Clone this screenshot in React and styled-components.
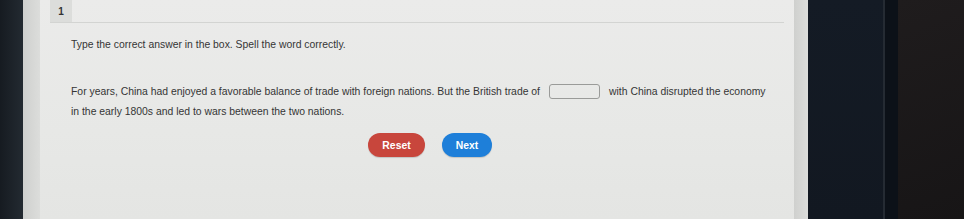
import React from 'react';
import styled, { createGlobalStyle } from 'styled-components';

const GlobalStyle = createGlobalStyle`
  html, body {
    margin: 0;
    padding: 0;
    height: 219px;
    overflow: hidden;
    background: #1b2027;
  }
  #root {
    height: 219px;
  }
`;

const Screen = styled.div`
  display: flex;
  height: 219px;
  font-family: 'Liberation Sans', Arial, sans-serif;
`;

const Bezel = styled.div`
  width: 23px;
  background: linear-gradient(90deg, #161b21, #232a31);
`;

const SideGutter = styled.div`
  width: ${p => p.w}px;
  background: linear-gradient(90deg, #cfd0ce, #dcdddb);
`;

const Main = styled.div`
  width: 754px;
  padding: 0 10px;
  box-sizing: border-box;
  background: linear-gradient(180deg, #ebebea 0%, #e7e8e6 60%, #e4e5e3 100%);
`;

const Header = styled.div`
  display: flex;
  border-bottom: 1px solid #d3d4d2;
  height: 22px;
`;

const Number = styled.div`
  width: 22px;
  height: 22px;
  background: #dcdddb;
  color: #333;
  font-size: 10px;
  font-weight: bold;
  display: flex;
  align-items: center;
  justify-content: center;
`;

const Body = styled.div`
  padding: 14px 0 0 21px;
  color: #353535;
  font-size: 10.4px;
`;

const Instructions = styled.p`
  margin: 0;
  line-height: 16px;
`;

const Passage = styled.p`
  margin: 29px 0 0;
  line-height: 20px;
  width: 695px;
`;

const Blank = styled.input`
  width: 51px;
  height: 15px;
  box-sizing: border-box;
  border: 1px solid #9a9b99;
  border-radius: 3px;
  background: transparent;
  margin: 0 9px;
  padding: 0;
  vertical-align: middle;
  position: relative;
  top: -1px;
`;

const Actions = styled.div`
  display: flex;
  gap: 17px;
  padding-left: 297px;
  margin-top: 11px;
`;

const Button = styled.button`
  width: ${p => p.w}px;
  height: 24px;
  border: none;
  border-radius: 12px;
  color: #fff;
  font-family: 'Liberation Sans', Arial, sans-serif;
  font-weight: bold;
  font-size: 10.4px;
  background: ${p => p.bg};
  box-shadow: 0 1px 1px rgba(0, 0, 0, 0.15);
`;

const Dark = styled.div`
  flex: 1;
  display: flex;
  background: #141a22;
`;

const Panel = styled.div`
  width: 75px;
  background: linear-gradient(180deg, #141b25, #121821);
`;

const Seam = styled.div`
  width: 2px;
  background: #252b33;
`;

const Edge = styled.div`
  width: 13px;
  background: #0c1118;
`;

const Far = styled.div`
  flex: 1;
  background: linear-gradient(160deg, #1f1c1d, #171516);
`;

export default function App() {
  return (
    <Screen>
      <GlobalStyle />
      <Bezel />
      <SideGutter w={17} />
      <Main>
        <Header>
          <Number>1</Number>
        </Header>
        <Body>
          <Instructions>Type the correct answer in the box. Spell the word correctly.</Instructions>
          <Passage>
            For years, China had enjoyed a favorable balance of trade with foreign nations. But the British trade of
            <Blank type="text" aria-label="answer" />
            with China disrupted the economy in the early 1800s and led to wars between the two nations.
          </Passage>
          <Actions>
            <Button w={57} bg="#c8463c">Reset</Button>
            <Button w={50} bg="#1e7fd9">Next</Button>
          </Actions>
        </Body>
      </Main>
      <SideGutter w={14} />
      <Dark>
        <Panel />
        <Seam />
        <Edge />
        <Far />
      </Dark>
    </Screen>
  );
}
